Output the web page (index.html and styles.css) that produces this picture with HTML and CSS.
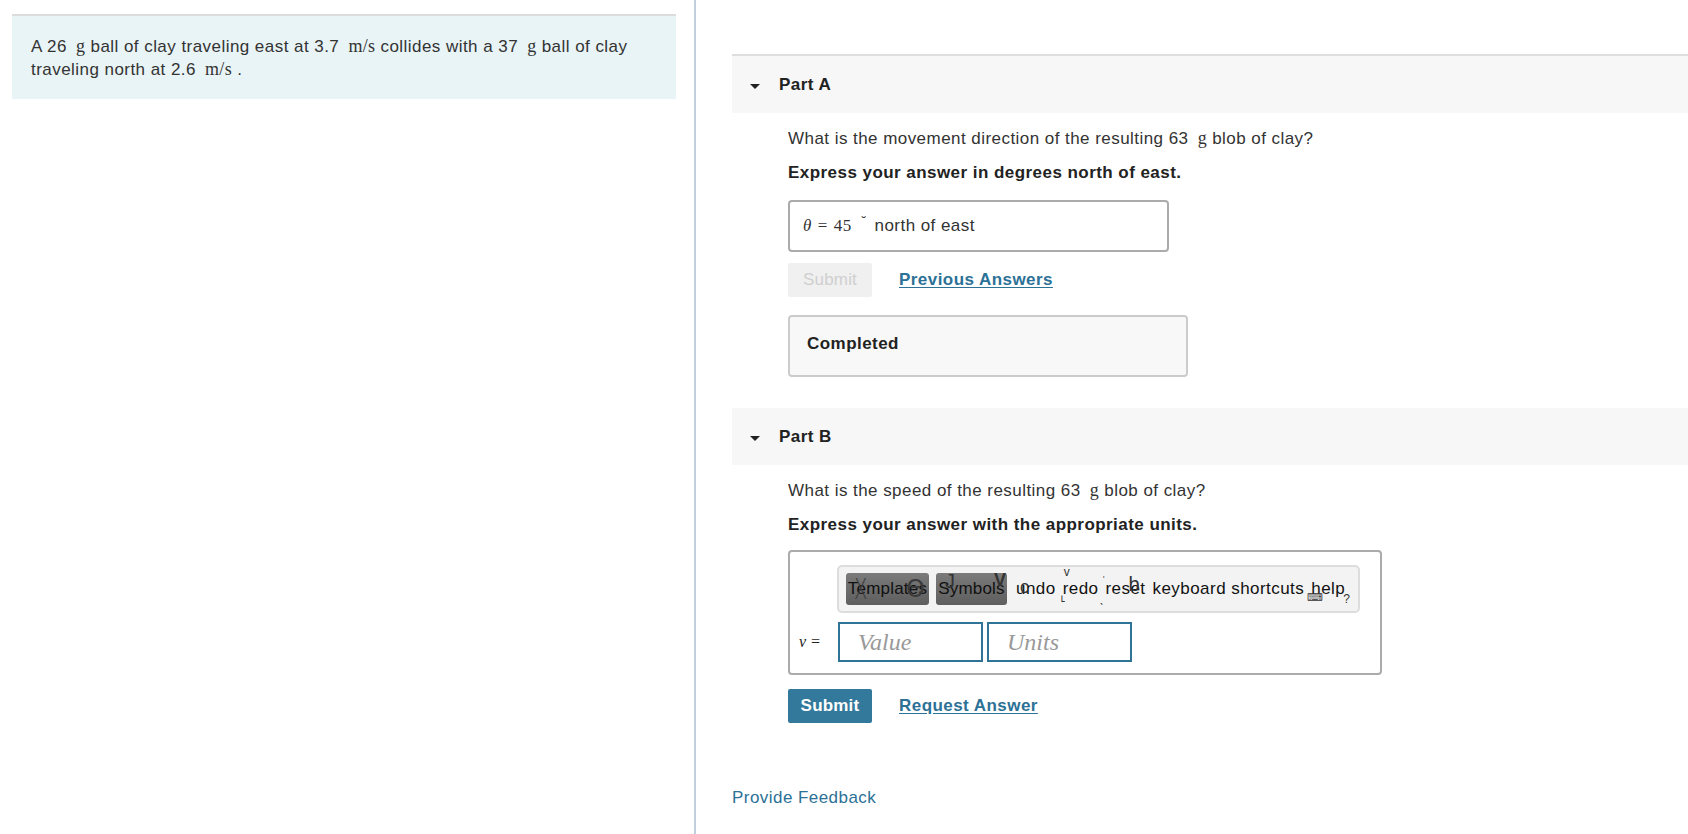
FILE: index.html
```html
<!DOCTYPE html>
<html lang="en">
<head>
<meta charset="utf-8">
<title>Clay collision</title>
<link rel="stylesheet" href="styles.css">
</head>
<body>
<div class="page">
  <aside class="left">
    <div class="intro">A 26&nbsp;<span class="m">g</span> ball of clay traveling east at 3.7&nbsp;<span class="m">m/s</span> collides with a 37&nbsp;<span class="m">g</span> ball of clay traveling north at 2.6&nbsp;<span class="m">m/s</span> .</div>
  </aside>
  <main class="right">
    <section class="part">
      <div class="part-head first"><span class="caret"></span>Part A</div>
      <div class="part-body body-a">
        <p class="q">What is the movement direction of the resulting 63&nbsp;<span class="m">g</span> blob of clay?</p>
        <p class="instr">Express your answer in degrees north of east.</p>
        <div class="answer-a">
          <span class="mi">θ</span><span class="mr eq">=</span><span class="mr">45</span><span class="deg">˘</span><span class="after">north of east</span>
        </div>
        <div class="actions actions-a">
          <button class="btn disabled">Submit</button>
          <a class="link" href="#">Previous Answers</a>
        </div>
        <div class="completed">Completed</div>
      </div>
    </section>
    <section class="part">
      <div class="part-head"><span class="caret"></span>Part B</div>
      <div class="part-body body-b">
        <p class="q">What is the speed of the resulting 63&nbsp;<span class="m">g</span> blob of clay?</p>
        <p class="instr">Express your answer with the appropriate units.</p>
        <div class="answer-b">
          <div class="toolbar">
            <span class="tbtn">Templates<i class="g g-x">X</i><i class="g g-o">Θ</i></span>
            <span class="tbtn tbtn-s">Symbols<i class="g g-j">J</i><i class="g g-v">V</i></span>
            <span class="tword">undo<i class="g g-u">c</i></span>
            <span class="tword">redo<i class="g g-r1">v</i><i class="g g-r2">˪</i><i class="g g-r3">ˌ</i><i class="g g-r4">ˎ</i></span>
            <span class="tword">reset<i class="g g-b">b</i></span>
            <span class="tword">keyboard shortcuts</span>
            <span class="tword">help<i class="g g-k">⌨</i><i class="g g-q">?</i></span>
          </div>
          <span class="vlabel"><span class="mi">v</span> =</span>
          <div class="inputs">
            <span class="field">Value</span>
            <span class="field">Units</span>
          </div>
        </div>
        <div class="actions actions-b">
          <button class="btn primary">Submit</button>
          <a class="link" href="#">Request Answer</a>
        </div>
      </div>
    </section>
    <a class="feedback" href="#">Provide Feedback</a>
  </main>
</div>
</body>
</html>
```
FILE: styles.css
```css
html, body {
  margin: 0;
  padding: 0;
  background: #fff;
}
body {
  font-family: "Liberation Sans", Arial, Helvetica, sans-serif;
  font-size: 17px;
  letter-spacing: 0.45px;
  color: #333;
}
.page {
  display: flex;
  min-height: 834px;
}
.left {
  box-sizing: border-box;
  width: 696px;
  flex: none;
  padding: 14px 18px 0 12px;
  border-right: 2px solid #c2cedd;
}
.intro {
  border-top: 2px solid #dcdcdc;
  background: #e9f4f6;
  padding: 19px 20px 18px 19px;
  line-height: 23px;
}
.m {
  font-family: "Liberation Serif", "Times New Roman", serif;
  font-size: 18px;
  letter-spacing: 0.3px;
  padding-left: 4px;
}
.mi {
  font-family: "Liberation Serif", "Times New Roman", serif;
  font-style: italic;
}
.mr {
  font-family: "Liberation Serif", "Times New Roman", serif;
}
.right {
  flex: 1;
  padding: 54px 0 0 36px;
  display: flex;
  flex-direction: column;
}
.part-head {
  height: 57px;
  background: #f7f7f7;
  display: flex;
  align-items: center;
  font-weight: bold;
  color: #222;
  line-height: 20px;
}
.part-head.first {
  border-top: 2px solid #dedede;
}
.caret {
  width: 0;
  height: 0;
  border-left: 5px solid transparent;
  border-right: 5px solid transparent;
  border-top: 5px solid #222;
  margin: 4px 19px 0 18px;
}
.part-body {
  padding-left: 56px;
}
p {
  margin: 0;
  line-height: 20px;
}
.q {
  margin-top: 15px;
}
.instr {
  margin-top: 14px;
  font-weight: bold;
  color: #222;
}
.answer-a {
  box-sizing: border-box;
  width: 381px;
  height: 52px;
  margin-top: 17px;
  border: 2px solid #ababab;
  border-radius: 4px;
  display: flex;
  align-items: center;
  padding-left: 13px;
}
.answer-a .mi { font-size: 17px; }
.answer-a .eq { margin: 0 6px 0 6px; font-size: 17px; }
.answer-a .mr { font-size: 17px; }
.deg {
  font-size: 13px;
  margin: -10px 8px 0 10px;
  color: #333;
}
.actions {
  display: flex;
  align-items: center;
  gap: 27px;
}
.actions-a { margin-top: 11px; }
.actions-b { margin-top: 14px; }
.btn {
  box-sizing: border-box;
  width: 84px;
  height: 34px;
  border: none;
  border-radius: 2px;
  font-family: "Liberation Sans", Arial, sans-serif;
  font-size: 17px;
  letter-spacing: 0.2px;
  font-weight: bold;
  padding: 0;
}
.btn.disabled {
  background: #f0f0f0;
  color: #cfcfcf;
  font-weight: normal;
}
.btn.primary {
  background: #33799b;
  color: #fff;
}
.link {
  color: #2c7196;
  font-weight: bold;
  text-decoration: underline;
  text-underline-offset: 2px;
}
.completed {
  box-sizing: border-box;
  width: 400px;
  height: 62px;
  margin-top: 18px;
  border: 2px solid #cbcbcb;
  border-radius: 4px;
  background: #f8f8f8;
  font-weight: bold;
  color: #222;
  padding: 17px 0 0 17px;
  line-height: 20px;
}
.part + .part {
  margin-top: 31px;
}
.answer-b {
  box-sizing: border-box;
  width: 594px;
  height: 125px;
  margin-top: 15px;
  border: 2px solid #ababab;
  border-radius: 4px;
  display: grid;
  grid-template-columns: 47px auto;
  align-content: start;
  row-gap: 9px;
  padding: 13px 0 0 0;
}
.toolbar {
  grid-column: 2;
  grid-row: 1;
  box-sizing: border-box;
  width: 523px;
  height: 48px;
  border: 2px solid #dddddd;
  border-radius: 5px;
  background: #f3f3f3;
  display: flex;
  align-items: center;
  padding-left: 7px;
  gap: 7px;
  color: #111;
}
.tbtn {
  position: relative;
  box-sizing: border-box;
  width: 83px;
  height: 32px;
  border-radius: 3px;
  background: linear-gradient(#7b7b7b, #5e5e5e);
  display: flex;
  align-items: center;
  justify-content: center;
  color: #111;
  letter-spacing: 0.2px;
}
.tbtn-s { width: 71px; margin-left: 0; margin-right: 2px; }
.tword {
  position: relative;
}
.g {
  position: absolute;
  font-style: normal;
  color: #333;
  pointer-events: none;
  letter-spacing: 0;
}
.g-x { left: 5px; top: 0; font-size: 28px; font-weight: 100; color: #3a3a3a; font-family: "DejaVu Sans", sans-serif; transform: scaleX(0.7); }
.g-o { left: 60px; top: 2px; font-size: 24px; color: #3a3a3a; font-family: "DejaVu Sans", sans-serif; }
.g-j { left: 9px; top: -3px; font-size: 20px; color: #333; }
.g-v { left: 58px; top: -3px; font-size: 18px; font-weight: bold; color: #333; }
.g-u { left: 4px; top: -2px; font-size: 18px; }
.g-r1 { left: 1px; top: -14px; font-size: 12px; }
.g-r2 { left: -2px; top: 10px; font-size: 14px; }
.g-r3 { left: 39px; top: -15px; font-size: 12px; }
.g-r4 { left: 37px; top: 12px; font-size: 12px; }
.g-b { left: 23px; top: -6px; font-size: 20px; }
.g-k { left: -4px; top: 12px; font-size: 11px; }
.g-q { left: 32px; top: 13px; font-size: 12px; }
.vlabel {
  grid-column: 1;
  grid-row: 2;
  align-self: center;
  padding-left: 9px;
  font-family: "Liberation Serif", "Times New Roman", serif;
  font-size: 16px;
  color: #222;
}
.inputs {
  grid-column: 2;
  grid-row: 2;
  display: flex;
  gap: 4px;
  margin-left: 1px;
}
.field {
  box-sizing: border-box;
  width: 145px;
  height: 40px;
  border: 2px solid #2f7396;
  font-family: "Liberation Serif", "Times New Roman", serif;
  font-style: italic;
  font-size: 24px;
  letter-spacing: 0;
  color: #999;
  padding-left: 18px;
  display: flex;
  align-items: center;
}
.feedback {
  margin-top: 65px;
  color: #2c7196;
  text-decoration: none;
  line-height: 20px;
  align-self: flex-start;
}
```
